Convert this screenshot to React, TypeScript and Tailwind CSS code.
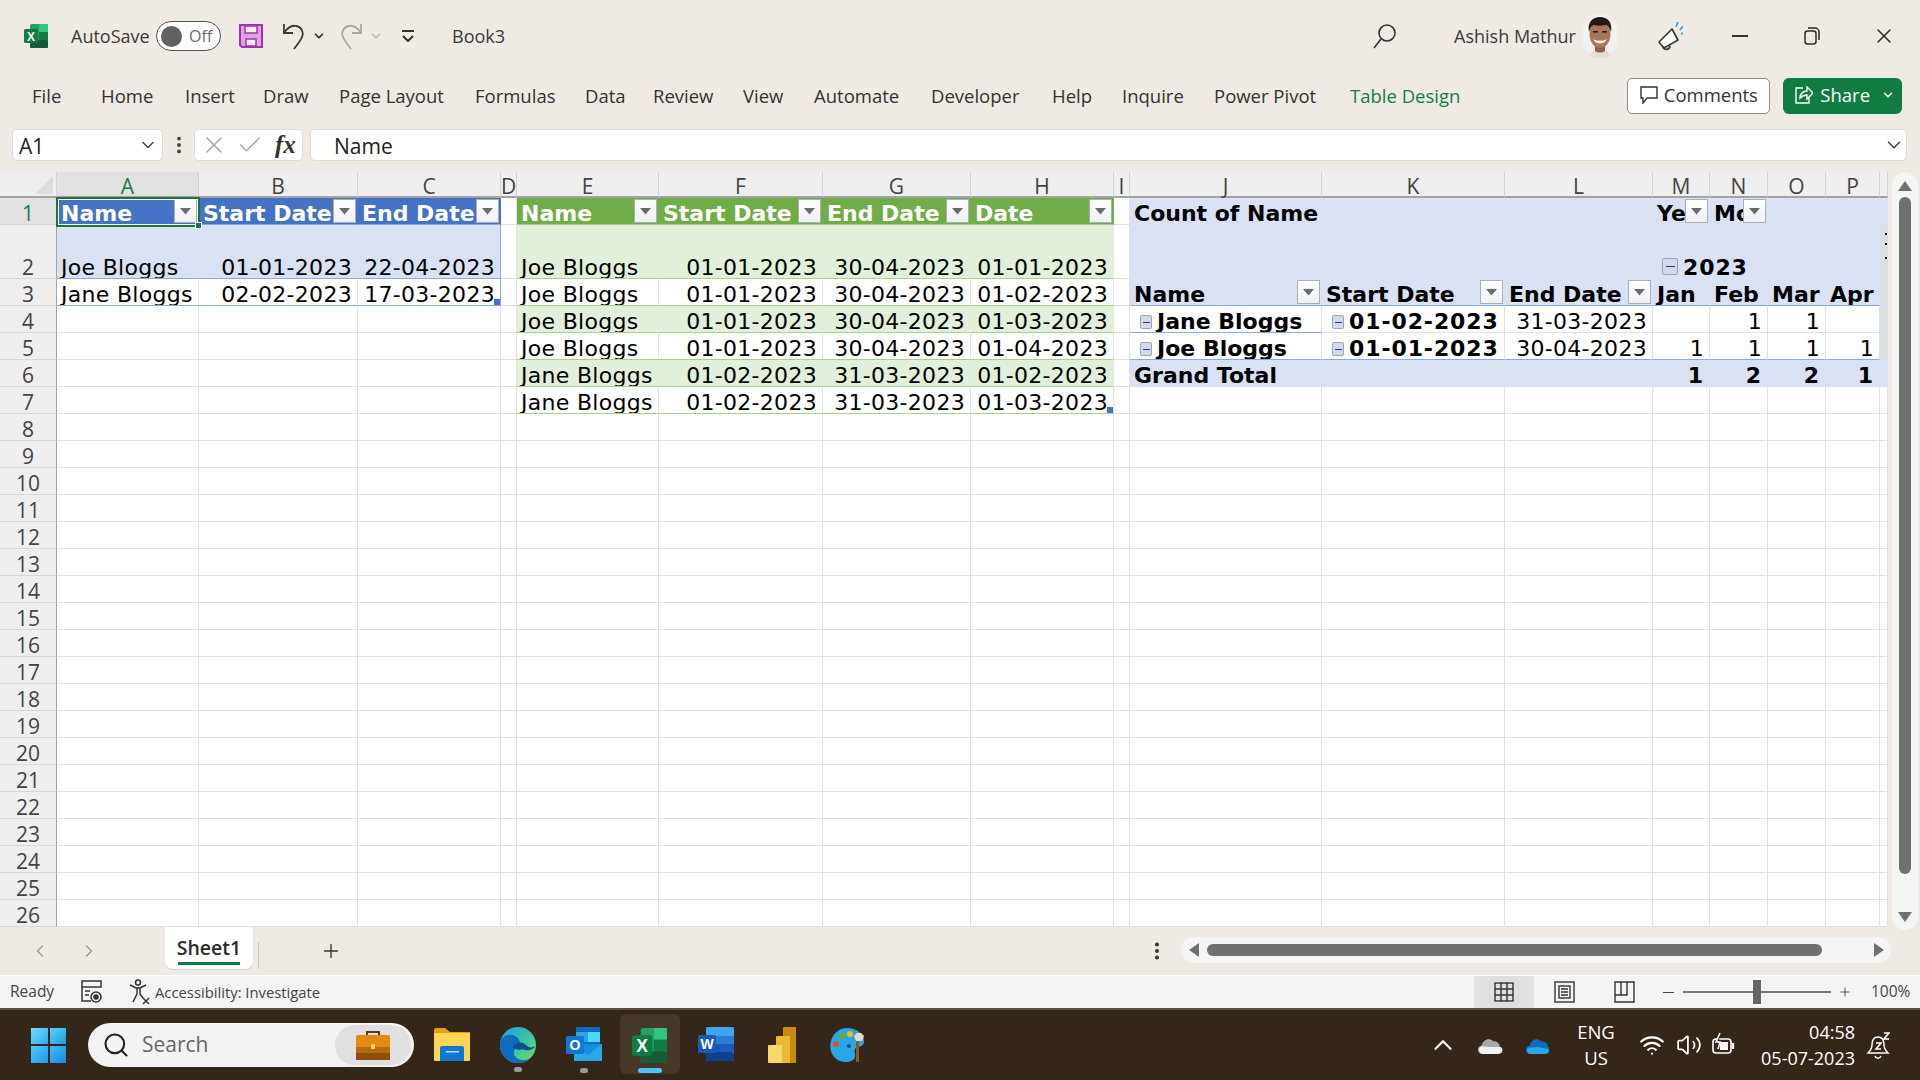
import React from 'react';
import { Check, ChevronDown, ChevronLeft, ChevronRight, ChevronUp, MoreVertical, Plus, Search, Volume2, Wifi, X } from 'lucide-react';

type Cell = {
  t?: string;
  b?: boolean;
  right?: boolean;
  cls?: string; // background + border colours
  color?: string;
  filter?: boolean;
  minus?: boolean;
  corner?: boolean;
  over?: boolean;
};

const COLS = ['A', 'B', 'C', 'D', 'E', 'F', 'G', 'H', 'I', 'J', 'K', 'L', 'M', 'N', 'O', 'P', 'Q'];
const cells: Record<string, Cell> = {};

const BLUE_HEAD = 'bg-[#4472c4] border-r-[#4472c4] border-b-[#8ea9db]';
const BLUE_BAND = 'bg-[#d9e1f2] border-r-[#d9e1f2] border-b-[#8ea9db]';
const BLUE_OPEN = 'bg-white border-b-[#8ea9db]';
const GREEN_HEAD = 'bg-[#70ad47] border-r-[#70ad47] border-b-[#a9d08e]';
const GREEN_BAND = 'bg-[#e2efda] border-r-[#e2efda] border-b-[#a9d08e]';
const GREEN_OPEN = 'bg-white border-b-[#a9d08e]';
const PIVOT = 'bg-[#d9e1f2] border-r-[#d9e1f2] border-b-[#d9e1f2]';
const PIVOT_LINE = 'bg-[#d9e1f2] border-r-[#d9e1f2] border-b-[#8ea9db]';

// first table
['Name', 'Start Date', 'End Date'].forEach((t, i) => {
  cells[COLS[i] + 1] = { t, b: true, color: 'text-white', filter: true, cls: BLUE_HEAD };
});
[
  ['Joe Bloggs', '01-01-2023', '22-04-2023'],
  ['Jane Bloggs', '02-02-2023', '17-03-2023'],
].forEach((row, r) => {
  row.forEach((t, i) => {
    cells[COLS[i] + (r + 2)] = { t, right: i > 0, cls: r === 0 ? BLUE_BAND : BLUE_OPEN };
  });
});
cells.C3.corner = true;
cells.C3.cls = 'bg-white border-b-[#8ea9db] border-r-[#8ea9db]';
cells.C2.cls = 'bg-[#d9e1f2] border-r-[#8ea9db] border-b-[#8ea9db]';

// second table
['Name', 'Start Date', 'End Date', 'Date'].forEach((t, i) => {
  cells[COLS[i + 4] + 1] = { t, b: true, color: 'text-white', filter: true, cls: GREEN_HEAD };
});
[
  ['Joe Bloggs', '01-01-2023', '30-04-2023', '01-01-2023'],
  ['Joe Bloggs', '01-01-2023', '30-04-2023', '01-02-2023'],
  ['Joe Bloggs', '01-01-2023', '30-04-2023', '01-03-2023'],
  ['Joe Bloggs', '01-01-2023', '30-04-2023', '01-04-2023'],
  ['Jane Bloggs', '01-02-2023', '31-03-2023', '01-02-2023'],
  ['Jane Bloggs', '01-02-2023', '31-03-2023', '01-03-2023'],
].forEach((row, r) => {
  row.forEach((t, i) => {
    cells[COLS[i + 4] + (r + 2)] = { t, right: i > 0, cls: r % 2 === 0 ? GREEN_BAND : GREEN_OPEN };
  });
});
cells.H7.corner = true;

// pivot
['J', 'K', 'L', 'M', 'N', 'O', 'P', 'Q'].forEach((c) => {
  cells[c + 1] = { cls: PIVOT };
  cells[c + 2] = { cls: PIVOT };
  cells[c + 3] = { cls: PIVOT_LINE };
  cells[c + 6] = { cls: PIVOT };
});
cells.J1 = { t: 'Count of Name', b: true, cls: PIVOT };
cells.M1 = { t: 'Ye', b: true, filter: true, cls: PIVOT };
cells.N1 = { t: 'Mo', b: true, filter: true, cls: PIVOT };
cells.M2 = { t: '2023', b: true, minus: true, over: true, cls: PIVOT };
cells.J3 = { t: 'Name', b: true, filter: true, cls: PIVOT_LINE };
cells.K3 = { t: 'Start Date', b: true, filter: true, cls: PIVOT_LINE };
cells.L3 = { t: 'End Date', b: true, filter: true, cls: PIVOT_LINE };
cells.M3 = { t: 'Jan', b: true, cls: PIVOT_LINE };
cells.N3 = { t: 'Feb', b: true, cls: PIVOT_LINE };
cells.O3 = { t: 'Mar', b: true, cls: PIVOT_LINE };
cells.P3 = { t: 'Apr', b: true, cls: PIVOT_LINE };
cells.J4 = { t: 'Jane Bloggs', b: true, minus: true, cls: 'border-b-[#8ea9db]' };
cells.K4 = { t: '01-02-2023', b: true, minus: true };
cells.L4 = { t: '31-03-2023', right: true };
cells.N4 = { t: '1', right: true };
cells.O4 = { t: '1', right: true };
cells.J5 = { t: 'Joe Bloggs', b: true, minus: true, cls: 'border-b-[#8ea9db]' };
cells.K5 = { t: '01-01-2023', b: true, minus: true, cls: 'border-b-[#8ea9db]' };
cells.L5 = { t: '30-04-2023', right: true, cls: 'border-b-[#8ea9db]' };
['M', 'N', 'O', 'P'].forEach((c) => {
  cells[c + 5] = { t: '1', right: true, cls: 'border-b-[#8ea9db]' };
});
cells.Q5 = { cls: 'border-b-[#8ea9db]' };
cells.J6 = { t: 'Grand Total', b: true, cls: PIVOT };
cells.M6 = { t: '1', b: true, right: true, cls: PIVOT };
cells.N6 = { t: '2', b: true, right: true, cls: PIVOT };
cells.O6 = { t: '2', b: true, right: true, cls: PIVOT };
cells.P6 = { t: '1', b: true, right: true, cls: PIVOT };

const FilterButton = () => (
  <span className="absolute right-[1px] bottom-[1px] w-[23px] h-[24px] flex items-center justify-center border border-[#a9b0bb] bg-gradient-to-b from-white to-[#eef0f3]">
    <svg width="11" height="7" viewBox="0 0 11 7"><path d="M0 0h11L5.5 6.5z" fill="#6b6b6b" /></svg>
  </span>
);

const MinusBox = ({ big }: { big?: boolean }) => (
  <span className={`shrink-0 flex items-center justify-center border border-[#9aa5bd] bg-[#d3d9e8] rounded-[2px] mb-[3px] ${big ? 'w-[16px] h-[17px] ml-[5px] mr-[5px]' : 'w-[12px] h-[14px] ml-[6px] mr-[5px]'}`}>
    <span className={`h-[1px] bg-[#30406b] ${big ? 'w-[9px]' : 'w-[7px]'}`} />
  </span>
);

const SheetCell = ({ id }: { id: string }) => {
  const c = cells[id] ?? {};
  const isNum = /^[0-9-]+$/.test(c.t ?? '');
  const weight = c.b ? (isNum ? 'font-bold tracking-[0.9px]' : 'font-bold') : 'tracking-[0.3px]';
  return (
    <div
      className={`relative flex items-end border-r border-b border-[#e1e1e1] whitespace-nowrap ${c.over ? 'overflow-visible z-10' : 'overflow-hidden'} ${c.right ? 'justify-end pr-[5px]' : 'pl-[4px]'} ${c.cls ?? 'bg-white'}`}
    >
      {c.minus && <MinusBox big={id === 'M2'} />}
      {c.t && <span className={`text-[22px] leading-[21px] ${weight} ${c.color ?? 'text-black'}`}>{c.t}</span>}
      {c.filter && <FilterButton />}
      {c.corner && <span className="absolute right-0 bottom-0 w-[6px] h-[6px] bg-[#4472c4]" />}
    </div>
  );
};

const ExcelLogo = ({ size = 24 }: { size?: number }) => (
  <svg width={size} height={size} viewBox="0 0 24 24">
    <rect x="6" y="0" width="18" height="24" rx="1.5" fill="#21a366" />
    <rect x="15" y="0" width="9" height="8" rx="1" fill="#33c481" />
    <rect x="15" y="8" width="9" height="8" fill="#107c41" />
    <rect x="6" y="16" width="18" height="8" rx="1" fill="#185c37" />
    <rect x="0" y="5" width="14" height="14" rx="1.5" fill="#107c41" />
    <text x="7" y="16.5" textAnchor="middle" fontSize="12" fontWeight="700" fill="#fff" fontFamily="Liberation Sans, sans-serif">X</text>
  </svg>
);

const SaveIcon = () => (
  <svg width="24" height="24" viewBox="0 0 24 24">
    <path d="M1 1h22v22H3l-2-2z" fill="#dca6dd" stroke="#a333ac" strokeWidth="2" />
    <rect x="6" y="2" width="12" height="7" fill="#f4ecf4" stroke="#a333ac" strokeWidth="1.5" />
    <rect x="7" y="15" width="10" height="7" fill="#f4ecf4" stroke="#a333ac" strokeWidth="1.5" />
  </svg>
);

const UndoIcon = ({ color, flip }: { color: string; flip?: boolean }) => (
  <svg width="24" height="28" viewBox="0 0 24 28" className={flip ? '-scale-x-100' : ''} fill="none" stroke={color} strokeWidth="1.8">
    <path d="M2 2v9h9" />
    <path d="M2 11C6 5 10 3 14 4c6 1 8 7 6 11-1 3-5 8-8 12" />
  </svg>
);

const Avatar = () => (
  <svg width="36" height="44" viewBox="0 0 36 44">
    <ellipse cx="18" cy="22" rx="18" ry="22" fill="#f2f1ef" />
    <path d="M8 42c1-6 6-7 10-7s9 1 10 7c-6 3-14 3-20 0z" fill="#e6dfd6" />
    <path d="M13 30h10v7c-3 2-7 2-10 0z" fill="#8d5f45" />
    <ellipse cx="18" cy="20" rx="10.5" ry="14" fill="#a9745a" />
    <path d="M7 18C5 8 11 3 18 3s13 5 11 15c-1-4-3-7-5-7-4 1-9 1-12 0-2 0-4 3-5 7z" fill="#211c1a" />
    <path d="M11 25c3 2 11 2 14 0-2 6-12 6-14 0z" fill="#f4e9df" />
    <rect x="11" y="17" width="5" height="1.6" fill="#2a1e18" />
    <rect x="20" y="17" width="5" height="1.6" fill="#2a1e18" />
  </svg>
);

const FeedbackIcon = () => (
  <svg width="26" height="30" viewBox="0 0 26 30" fill="none" stroke="#3a3a3a" strokeWidth="1.7" strokeLinejoin="round">
    <path d="M15 8 21 19 7 27 2 21z" fill="#fff" />
    <path d="M6 25c0 4 6 5 7 0" />
    <path d="M19 6l2-5M23 9l3-4M24 13l2-1" stroke="#38a3dc" />
  </svg>
);

const RestoreIcon = () => (
  <svg width="16" height="18" viewBox="0 0 16 18" fill="none" stroke="#2b2b2b" strokeWidth="1.5">
    <rect x="1" y="4" width="11" height="13" rx="2.5" />
    <path d="M4 1h7a4 4 0 0 1 4 4v8" />
  </svg>
);

const TitleBar = () => (
  <div className="h-[72px] flex items-center pl-[24px] text-[#3b3b3b] text-[18px]">
    <ExcelLogo />
    <span className="ml-[23px] w-[85px]">AutoSave</span>
    <span className="w-[65px] h-[30px] rounded-full border border-[#555] bg-white flex items-center pl-[4px] gap-[7px] text-[16px] text-[#6a6a6a]">
      <span className="w-[21px] h-[21px] rounded-full bg-[#616161]" />
      Off
    </span>
    <span className="ml-[18px]"><SaveIcon /></span>
    <span className="ml-[19px]"><UndoIcon color="#3a3a3a" /></span>
    <ChevronDown className="ml-[6px] w-[14px] h-[14px] text-[#333]" strokeWidth={3} />
    <span className="ml-[13px]"><UndoIcon color="#a8a8a8" flip /></span>
    <ChevronDown className="ml-[6px] w-[14px] h-[14px] text-[#bbb]" strokeWidth={3} />
    <span className="ml-[18px] w-[13px] flex flex-col items-center gap-[3px]">
      <span className="w-[12px] h-[2px] bg-[#333]" />
      <svg width="12" height="7" viewBox="0 0 12 7" fill="none" stroke="#333" strokeWidth="2"><path d="M1 1l5 5 5-5" /></svg>
    </span>
    <span className="ml-[38px]">Book3</span>
    <svg className="ml-[868px]" width="24" height="26" viewBox="0 0 24 26" fill="none" stroke="#333" strokeWidth="1.6">
      <circle cx="14" cy="10" r="8" />
      <path d="M8 16 1 25" />
    </svg>
    <span className="ml-[57px] w-[128px]">Ashish Mathur</span>
    <Avatar />
    <span className="ml-[39px]"><FeedbackIcon /></span>
    <span className="ml-[49px] w-[16px] h-[2px] bg-[#333]" />
    <span className="ml-[56px]"><RestoreIcon /></span>
    <X className="ml-[52px] w-[24px] h-[24px] text-[#2b2b2b]" strokeWidth={1.5} />
  </div>
);

const TABS: [string, string][] = [
  ['File', 'w-[69px]'],
  ['Home', 'w-[84px]'],
  ['Insert', 'w-[78px]'],
  ['Draw', 'w-[76px]'],
  ['Page Layout', 'w-[136px]'],
  ['Formulas', 'w-[110px]'],
  ['Data', 'w-[68px]'],
  ['Review', 'w-[90px]'],
  ['View', 'w-[71px]'],
  ['Automate', 'w-[117px]'],
  ['Developer', 'w-[121px]'],
  ['Help', 'w-[70px]'],
  ['Inquire', 'w-[92px]'],
  ['Power Pivot', 'w-[136px]'],
];

const RibbonTabs = () => (
  <div className="h-[48px] flex items-center pl-[32px] text-[18.5px] text-[#333]">
    {TABS.map(([label, w]) => (
      <span key={label} className={`${w} whitespace-nowrap`}>{label}</span>
    ))}
    <span className="text-[#1b7a45] whitespace-nowrap">Table Design</span>
    <button className="ml-[167px] w-[143px] h-[36px] rounded-[5px] border border-[#8f8f8f] bg-white flex items-center justify-center gap-[6px] pb-[2px] text-[18.5px] text-[#333]">
      <svg width="18" height="18" viewBox="0 0 18 18" fill="none" stroke="#333" strokeWidth="1.4"><path d="M1 1h16v11H7l-4 5v-5H1z" /></svg>
      Comments
    </button>
    <button className="ml-[13px] w-[119px] h-[36px] rounded-[6px] bg-[#107c41] flex items-center pl-[12px] pb-[2px] text-[18.5px] text-white">
      <svg width="18" height="18" viewBox="0 0 18 18" fill="none" stroke="#fff" strokeWidth="1.4"><path d="M8 2H1v15h13v-5M5 12c0-5 4-7 7-7V1l6 6-6 6V9c-3 0-5 1-7 3z" /></svg>
      <span className="ml-[7px]">Share</span>
      <ChevronDown className="ml-[11px] w-[14px] h-[14px]" strokeWidth={2.5} />
    </button>
  </div>
);

const FormulaBar = () => (
  <div className="h-[52px] pt-[9px] flex items-start pl-[12px] text-[#222]">
    <div className="w-[151px] h-[32px] bg-white rounded-[5px] border border-[#dcdcdc] flex items-center pl-[6px] pr-[4px] pt-[3px] justify-between text-[21px]">
      A1
      <ChevronDown className="w-[20px] h-[20px] text-[#444] -mt-[3px]" strokeWidth={1.8} />
    </div>
    <MoreVertical className="ml-[5px] mt-[5px] w-[22px] h-[22px] text-[#444]" strokeWidth={2.2} />
    <div className="ml-[4px] w-[109px] h-[32px] bg-white rounded-[5px] border border-[#dcdcdc] flex items-center pl-[5px] gap-[8px]">
      <X className="w-[28px] h-[28px] text-[#a8a8a8]" strokeWidth={1.3} />
      <Check className="w-[28px] h-[28px] text-[#a8a8a8]" strokeWidth={1.3} />
      <span className="ml-[3px] font-['Liberation_Serif',serif] italic font-bold text-[25px] text-[#333]">fx</span>
    </div>
    <div className="ml-[7px] w-[1597px] h-[32px] bg-white rounded-[5px] border border-[#dcdcdc] flex items-center justify-between pl-[23px] pr-[1px] pt-[3px] text-[21px]">
      Name
      <ChevronDown className="w-[22px] h-[22px] text-[#444] -mt-[3px]" strokeWidth={1.6} />
    </div>
  </div>
);

const Sheet = () => (
  <div className="h-[755px] flex">
    <div className="relative w-[1888px] grid grid-cols-[57px_142px_159px_143px_16px_142px_164px_148px_143px_16px_192px_183px_148px_57px_58px_58px_54px_8px] grid-rows-[26px_27px_54px_repeat(24,27px)] font-['DejaVu_Sans',sans-serif] bg-white">
      <div className="bg-[#efefef] border-b-2 border-r border-[#a3a3a3] border-r-[#d4d4d4] flex items-end justify-end pr-[3px] pb-[2px]">
        <svg width="18" height="18" viewBox="0 0 18 18"><path d="M18 0v18H0z" fill="#dcdcdc" /></svg>
      </div>
      {COLS.map((c) => (
        <div
          key={c}
          className={`flex items-center justify-center pt-[5px] border-b-2 border-b-[#a3a3a3] border-r border-r-[#d4d4d4] font-['Open_Sans',sans-serif] text-[21px] leading-none ${c === 'A' ? 'bg-[#e1e1e1] text-[#1a7a4c]' : 'bg-[#efefef] text-[#444]'}`}
        >
          {c === 'Q' ? '' : c}
        </div>
      ))}
      {Array.from({ length: 26 }, (_, i) => i + 1).map((row) => (
        <React.Fragment key={row}>
          <div
            className={`flex justify-center border-b border-b-[#d8d8d8] border-r border-r-[#a3a3a3] font-['Open_Sans',sans-serif] text-[21px] leading-[21px] items-end ${row === 1 ? 'bg-[#e1e1e1] text-[#1a7a4c]' : 'bg-[#efefef] text-[#444]'}`}
          >
            {row}
          </div>
          {COLS.map((c) => (
            <SheetCell key={c + row} id={c + row} />
          ))}
        </React.Fragment>
      ))}
      {/* selected cell */}
      <div className="absolute left-[56px] top-[25px] w-[144px] h-[30px] border-2 border-[#1f7246] shadow-[inset_0_0_0_1px_#ffffff] pointer-events-none">
        <span className="absolute -right-[4px] -bottom-[4px] w-[7px] h-[7px] bg-[#1f7246] border border-white" />
      </div>
      {/* pivot values clipped at the pane edge */}
      <div className="absolute left-[1880px] top-[53px] w-[8px] h-[135px] bg-[#dcdfe2]">
        <span className="absolute right-[1px] top-[8px] w-[2px] h-[2px] bg-black" />
        <span className="absolute right-[1px] top-[18px] w-[2px] h-[2px] bg-black" />
        <span className="absolute right-[1px] top-[32px] w-[2px] h-[2px] bg-black" />
      </div>
    </div>
    <div className="w-[32px] bg-[#efeae4] flex justify-center pl-[2px]">
      <div className="w-[26px] h-[758px] rounded-full bg-[#f5f5f5] flex flex-col items-center relative z-10">
        <svg className="mt-[9px]" width="14" height="10" viewBox="0 0 14 10"><path d="M7 0l7 10H0z" fill="#707070" /></svg>
        <div className="mt-[6px] w-[12px] h-[677px] rounded-full bg-[#707070]" />
        <svg className="mt-[38px]" width="14" height="10" viewBox="0 0 14 10"><path d="M7 10 14 0H0z" fill="#707070" /></svg>
      </div>
    </div>
  </div>
);

const SheetTabs = () => (
  <div className="h-[48px] flex items-start text-[#333]">
    <ChevronLeft className="ml-[30px] mt-[14px] w-[20px] h-[20px] text-[#9a9a9a]" strokeWidth={1.6} />
    <ChevronRight className="ml-[29px] mt-[14px] w-[20px] h-[20px] text-[#9a9a9a]" strokeWidth={1.6} />
    <div className="ml-[66px] w-[88px] h-[42px] bg-white rounded-b-[8px] flex flex-col items-center pt-[7px] shadow-[0_1px_1px_rgba(0,0,0,0.1)]">
      <span className="text-[19.5px] leading-[28px] font-semibold text-[#2b2b2b]">Sheet1</span>
      <span className="w-[62px] h-[3px] bg-[#107c41]" />
    </div>
    <span className="ml-[5px] mt-[15px] w-[1px] h-[27px] bg-[#c9c9c9]" />
    <Plus className="ml-[61px] mt-[13px] w-[22px] h-[22px] text-[#333]" strokeWidth={1.5} />
    <MoreVertical className="ml-[804px] mt-[13px] w-[22px] h-[22px] text-[#333]" strokeWidth={2.4} />
    <div className="ml-[13px] mt-[10px] w-[710px] h-[26px] rounded-full bg-[#f5f5f5] flex items-center pl-[8px]">
      <svg width="10" height="14" viewBox="0 0 10 14"><path d="M0 7l10-7v14z" fill="#707070" /></svg>
      <div className="ml-[8px] w-[615px] h-[12px] rounded-full bg-[#707070]" />
      <svg className="ml-[52px]" width="10" height="14" viewBox="0 0 10 14"><path d="M10 7 0 0v14z" fill="#707070" /></svg>
    </div>
  </div>
);

const StatusBar = () => (
  <div className="h-[33px] bg-[#f4f4f4] border-t border-white flex items-center pl-[10px] text-[15.5px] text-[#444]">
    <span className="w-[71px]">Ready</span>
    <svg width="22" height="24" viewBox="0 0 22 24" fill="none" stroke="#333" strokeWidth="1.5">
      <path d="M1 1h19v6H1zM1 7v14h9M4 11h5M4 15h4" />
      <circle cx="15" cy="17" r="5" />
      <circle cx="15" cy="17" r="2" fill="#333" />
    </svg>
    <svg className="ml-[25px]" width="24" height="26" viewBox="0 0 24 26" fill="none" stroke="#333" strokeWidth="1.5">
      <circle cx="10" cy="3.5" r="2.5" />
      <path d="M2 6l6 3h4l6-3M9 9v6l-4 8M12 9v6l3 4" />
      <path d="M15 19l6 6M21 19l-6 6" />
    </svg>
    <span className="ml-[3px] w-[1319px] whitespace-nowrap text-[14.8px]">Accessibility: Investigate</span>
    <div className="w-[60px] h-[32px] bg-[#e0e0e0] flex items-center justify-center">
      <svg width="20" height="20" viewBox="0 0 20 20" fill="none" stroke="#333" strokeWidth="1.4">
        <rect x="1" y="1" width="18" height="18" />
        <path d="M7 1v18M13 1v18M1 7h18M1 13h18" />
      </svg>
    </div>
    <svg className="ml-[20px]" width="21" height="22" viewBox="0 0 21 22" fill="none" stroke="#333" strokeWidth="1.4">
      <rect x="1" y="1" width="19" height="20" />
      <rect x="5" y="5" width="11" height="12" />
      <path d="M7 8h7M7 11h7M7 14h7" />
    </svg>
    <svg className="ml-[39px]" width="21" height="22" viewBox="0 0 21 22" fill="none" stroke="#333" strokeWidth="1.4">
      <path d="M1 1h19v20H1zM1 14h12V1M7 1v13" />
    </svg>
    <span className="ml-[28px] w-[11px] h-[1px] bg-[#444]" />
    <div className="ml-[9px] relative w-[148px] h-[2px] bg-[#777]">
      <span className="absolute left-[70px] -top-[11px] w-[8px] h-[24px] bg-[#666]" />
    </div>
    <Plus className="ml-[7px] w-[14px] h-[14px] text-[#444]" strokeWidth={1.5} />
    <span className="ml-[19px]">100%</span>
  </div>
);

const FolderIcon = () => (
  <svg width="36" height="34" viewBox="0 0 36 34">
    <path d="M0 3a2 2 0 0 1 2-2h9l5 4h20v6H0z" fill="#e8a10c" />
    <path d="M0 6h36v27a1 1 0 0 1-1 1H1a1 1 0 0 1-1-1z" fill="#fcd652" />
    <path d="M6 21a2 2 0 0 1 2-2h20a2 2 0 0 1 2 2v13H6z" fill="#0f78d4" />
    <rect x="12" y="24" width="13" height="1.5" fill="#bfe0fb" />
  </svg>
);

const EdgeIcon = () => (
  <svg width="36" height="36" viewBox="0 0 36 36">
    <defs>
      <linearGradient id="edgeGreen" x1="0" y1="0" x2="1" y2="1">
        <stop offset="0" stopColor="#1b9de2" />
        <stop offset="0.6" stopColor="#45c99a" />
        <stop offset="1" stopColor="#6fdc5e" />
      </linearGradient>
    </defs>
    <circle cx="18" cy="18" r="18" fill="url(#edgeGreen)" />
    <path d="M0 18C0 8 10 6 15 9c7 3 5 11 3 13-3-1-6 2-3 7 2 4 9 6 16 2-4 4-8 5-13 5C8 36 0 28 0 18z" fill="#0f6cbd" />
    <path d="M13 20c2-5 9-6 13-2 3 3 6 3 9 1-1 3-6 5-10 4-3-1-5 0-6 0-2-1-4-1-6-3z" fill="#0d4f8f" />
  </svg>
);

const OutlookIcon = () => (
  <svg width="36" height="34" viewBox="0 0 36 34">
    <rect x="10" y="0" width="24" height="18" rx="1" fill="#0f6cbd" />
    <rect x="22" y="5" width="12" height="10" fill="#50d9ff" />
    <rect x="10" y="5" width="12" height="10" fill="#28a8ea" />
    <path d="M8 17h28v16a1 1 0 0 1-1 1H9a1 1 0 0 1-1-1z" fill="#1490df" />
    <path d="M8 20l14 8 14-11v17H8z" fill="#28a8ea" />
    <rect x="0" y="9" width="18" height="18" rx="1.5" fill="#0f78d4" />
    <text x="9" y="23" textAnchor="middle" fontSize="14" fontWeight="700" fill="#fff" fontFamily="Liberation Sans, sans-serif">O</text>
  </svg>
);

const WordIcon = () => (
  <svg width="36" height="34" viewBox="0 0 36 34">
    <rect x="8" y="0" width="28" height="34" rx="2" fill="#41a5ee" />
    <rect x="8" y="0" width="28" height="9" rx="2" fill="#41a5ee" />
    <rect x="8" y="9" width="28" height="8" fill="#2b7cd3" />
    <rect x="8" y="17" width="28" height="8" fill="#185abd" />
    <rect x="8" y="25" width="28" height="9" rx="2" fill="#103f91" />
    <rect x="0" y="8" width="18" height="18" rx="1.5" fill="#185abd" />
    <text x="9" y="22" textAnchor="middle" fontSize="14" fontWeight="700" fill="#fff" fontFamily="Liberation Sans, sans-serif">W</text>
  </svg>
);

const PowerBiIcon = () => (
  <svg width="28" height="36" viewBox="0 0 28 36">
    <rect x="15" y="0" width="13" height="36" rx="1" fill="#c98a0f" />
    <rect x="8" y="9" width="14" height="27" rx="1" fill="#ecb92f" />
    <rect x="0" y="18" width="14" height="18" rx="1" fill="#f6d76b" />
  </svg>
);

const PaintIcon = () => (
  <svg width="36" height="36" viewBox="0 0 36 36">
    <path d="M17 1c10 0 18 7 17 14-1 6-7 4-9 7-2 4 3 7-2 11-4 3-13 3-18-2C0 26-1 18 2 11 5 5 10 1 17 1z" fill="#2aa6e6" />
    <circle cx="12" cy="9" r="3" fill="#6ca92f" />
    <circle cx="20" cy="7" r="3" fill="#f5b921" />
    <circle cx="6" cy="17" r="3" fill="#d2571f" />
    <circle cx="19" cy="19" r="2" fill="#0f4c7a" />
    <rect x="26" y="12" width="3" height="23" fill="#8a5a2b" />
    <path d="M24 9l3-3 4 0 3 3-2 5h-6z" fill="#e8d9bf" />
  </svg>
);

const Taskbar = () => (
  <div className="h-[72px] bg-[#35261a] border-t-[2px] border-[#584b3f] flex items-center pl-[31px] text-white">
    <div className="grid grid-cols-2 gap-[2px] w-[35px] h-[35px]">
      <span className="bg-gradient-to-br from-[#6fe0ff] to-[#2aa9ef]" />
      <span className="bg-gradient-to-br from-[#55d2fb] to-[#1f9ceb]" />
      <span className="bg-gradient-to-br from-[#4fcafa] to-[#1d97e8]" />
      <span className="bg-gradient-to-br from-[#3fbdf6] to-[#1689e0]" />
    </div>
    <div className="ml-[22px] w-[326px] h-[44px] rounded-full bg-[#f3f3f3] flex items-center pl-[14px] text-[#666] text-[21px]">
      <Search className="w-[28px] h-[28px] text-[#222]" strokeWidth={1.8} />
      <span className="ml-[12px] w-[193px]">Search</span>
      <span className="w-[76px] h-[40px] rounded-full bg-[#e0e0e0] flex items-center justify-center">
        <svg width="34" height="30" viewBox="0 0 34 30">
          <path d="M11 6V2h12v4" fill="none" stroke="#5a3a1a" strokeWidth="2" />
          <rect x="0" y="5" width="34" height="25" rx="2" fill="#e38a12" />
          <rect x="0" y="17" width="34" height="6" fill="#b96a0c" />
          <rect x="0" y="23" width="34" height="7" fill="#8e4f08" />
          <rect x="15" y="14" width="4" height="5" fill="#f6d76b" />
        </svg>
      </span>
    </div>
    <div className="ml-[5px] flex">
      <div className="w-[66px] flex justify-center"><FolderIcon /></div>
      <div className="relative w-[66px] flex justify-center">
        <EdgeIcon />
        <span className="absolute -bottom-[9px] left-[29px] w-[8px] h-[5px] rounded-full bg-[#9a9a9a]" />
      </div>
      <div className="relative w-[66px] flex justify-center">
        <OutlookIcon />
        <span className="absolute -bottom-[10px] left-[29px] w-[8px] h-[5px] rounded-full bg-[#9a9a9a]" />
      </div>
      <div className="relative w-[66px] flex justify-center items-center">
        <span className="absolute left-[3px] -top-[13px] w-[60px] h-[60px] rounded-[6px] bg-[#453829]" />
        <span className="relative -ml-[2px]"><ExcelLogo size={35} /></span>
        <span className="absolute left-[21px] -bottom-[10px] w-[24px] h-[5px] rounded-full bg-[#4cc2ff]" />
      </div>
      <div className="w-[66px] flex justify-center"><WordIcon /></div>
      <div className="w-[66px] flex justify-center"><PowerBiIcon /></div>
      <div className="w-[66px] flex justify-center"><PaintIcon /></div>
    </div>
    <div className="ml-[547px] flex items-center">
      <ChevronUp className="w-[30px] h-[30px] text-white" strokeWidth={1.8} />
      <svg className="ml-[20px]" width="26" height="17" viewBox="0 0 36 24">
        <path d="M6 24a6 6 0 0 1-1-12c1-7 10-12 16-6 6-1 10 4 9 7 3 1 4 11-3 11z" fill="#a8a8a8" />
        <path d="M6 24a6 6 0 0 1-2-11l12 1 16 0c4 3 3 10-5 10z" fill="#f2f2f2" />
      </svg>
      <svg className="ml-[22px]" width="26" height="17" viewBox="0 0 36 24">
        <path d="M6 24a6 6 0 0 1-1-12c1-7 10-12 16-6 6-1 10 4 9 7 3 1 4 11-3 11z" fill="#0f6cbd" />
        <path d="M5 24a5 5 0 0 1-2-9l13-1 15 3c2 2 1 7-4 7z" fill="#28a8ea" />
      </svg>
      <div className="ml-[14px] w-[60px] flex flex-col items-center text-[18.5px] leading-[26px]">
        <span>ENG</span>
        <span>US</span>
      </div>
      <div className="ml-[11px] w-[30px] flex justify-center"><Wifi className="w-[26px] h-[26px]" strokeWidth={2} /></div>
      <div className="ml-[7px] w-[30px] flex justify-center"><Volume2 className="w-[26px] h-[26px]" strokeWidth={1.6} /></div>
      <div className="ml-[5px] w-[30px] flex justify-center">
        <svg width="26" height="26" viewBox="0 0 26 26" fill="none" stroke="#fff" strokeWidth="1.6">
          <rect x="2" y="7" width="18" height="14" rx="3" />
          <rect x="9" y="10" width="8" height="8" fill="#fff" stroke="none" />
          <path d="M22 11v6" strokeWidth="2.4" />
          <path d="M9 1 5 10h4l-2 7" fill="#35261a" />
        </svg>
      </div>
      <div className="ml-[6px] w-[110px] flex flex-col items-end text-[18px] leading-[26px] whitespace-nowrap">
        <span>04:58</span>
        <span>05-07-2023</span>
      </div>
      <div className="ml-[8px] w-[30px] flex justify-center">
        <svg width="24" height="30" viewBox="0 0 24 30" fill="none" stroke="#fff" strokeWidth="1.5">
          <path d="M12 7C7 7 6 11 6 15c0 4-2 6-4 8h20c-2-2-4-4-4-8 0-4-1-8-6-8z" />
          <path d="M9 26c1 3 5 3 6 0" />
          <path d="M10 13h5l-5 6h5M18 3h5l-5 6h5" strokeWidth="1.6" />
        </svg>
      </div>
    </div>
  </div>
);

export default function App() {
  return (
    <div className="w-[1920px] h-[1080px] overflow-hidden bg-[#efeae4] font-['Open_Sans',sans-serif]">
      <TitleBar />
      <RibbonTabs />
      <FormulaBar />
      <Sheet />
      <SheetTabs />
      <StatusBar />
      <Taskbar />
    </div>
  );
}
